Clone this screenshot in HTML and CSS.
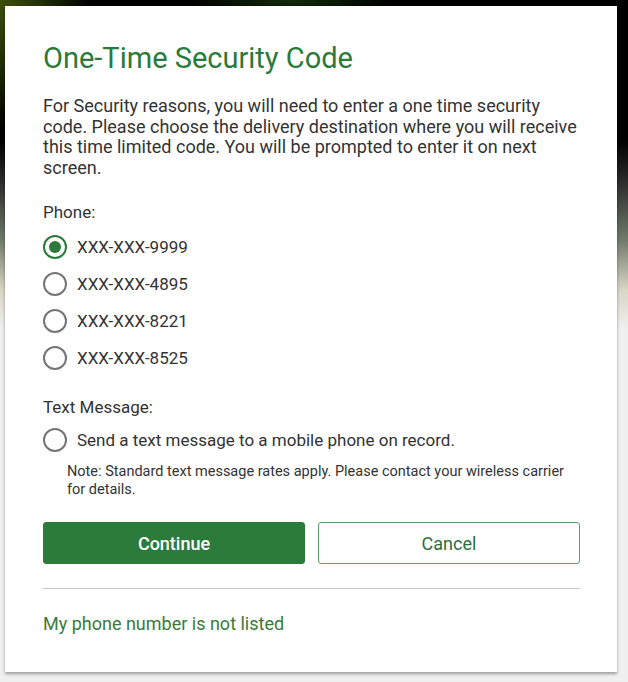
FILE: index.html
```html
<!DOCTYPE html>
<html>
<head>
<meta charset="utf-8">
<link rel="stylesheet" href="styles.css">
</head>
<body>
<div class="card">
  <h1 class="title">One-Time Security Code</h1>
  <p class="intro">For Security reasons, you will need to enter a one time security code. Please choose the delivery destination where you will receive this time limited code. You will be prompted to enter it on next screen.</p>
  <div class="group-label">Phone:</div>
  <ul class="options">
    <li class="option"><span class="radio checked"></span><span class="opt-text">XXX-XXX-9999</span></li>
    <li class="option"><span class="radio"></span><span class="opt-text">XXX-XXX-4895</span></li>
    <li class="option"><span class="radio"></span><span class="opt-text">XXX-XXX-8221</span></li>
    <li class="option"><span class="radio"></span><span class="opt-text">XXX-XXX-8525</span></li>
  </ul>
  <div class="group-label group-label-2">Text Message:</div>
  <ul class="options options-2">
    <li class="option"><span class="radio"></span><span class="opt-text">Send a text message to a mobile phone on record.</span></li>
  </ul>
  <p class="note">Note: Standard text message rates apply. Please contact your wireless carrier for details.</p>
  <div class="buttons">
    <button class="btn btn-primary">Continue</button>
    <button class="btn btn-secondary">Cancel</button>
  </div>
  <hr class="divider">
  <a class="link">My phone number is not listed</a>
</div>
</body>
</html>
```
FILE: styles.css
```css
html, body {
  margin: 0;
  padding: 0;
}
body {
  width: 628px;
  height: 682px;
  overflow: hidden;
  font-family: Roboto, "Liberation Sans", sans-serif;
  background:
    radial-gradient(ellipse 90px 130px at 0 0, #3d4f0c 0%, rgba(61,79,12,0.6) 45%, rgba(0,0,0,0) 100%),
    radial-gradient(ellipse 100px 20px at 290px 0, rgba(20,50,10,0.9) 0%, rgba(0,0,0,0) 100%),
    linear-gradient(to bottom, #000 0px, #000 140px, #2a2a2a 180px, #707a6a 240px, #d8d6c4 290px, #f0f0f0 330px, #f0f0f0 682px);
  padding-top: 6px;
  box-sizing: border-box;
}
.card {
  margin-left: 5px;
  width: 612px;
  box-sizing: border-box;
  background: #fff;
  padding: 35px 37px 36px 38px;
  box-shadow: 0 2px 3px rgba(0,0,0,0.35);
  color: #333;
}
.title {
  margin: 0;
  font-size: 29px;
  font-weight: 400;
  line-height: 34px;
  color: #2a7a3c;
}
.intro {
  margin: 21px 0 0;
  font-size: 18px;
  line-height: 20.5px;
  color: #333;
}
.group-label {
  margin-top: 23px;
  font-size: 17px;
  line-height: 22px;
  color: #333;
}
.group-label-2 {
  margin-top: 26px;
}
.options {
  list-style: none;
  margin: 12px 0 0;
  padding: 0;
  display: flex;
  flex-direction: column;
  gap: 13px;
}
.options-2 {
  margin-top: 10px;
}
.option {
  display: flex;
  align-items: center;
  gap: 10px;
  height: 24px;
}
.radio {
  width: 24px;
  height: 24px;
  box-sizing: border-box;
  border: 2px solid #757575;
  border-radius: 50%;
  flex: none;
  position: relative;
}
.radio.checked {
  border-color: #2a7a3c;
}
.radio.checked::after {
  content: "";
  position: absolute;
  left: 4px;
  top: 4px;
  width: 12px;
  height: 12px;
  border-radius: 50%;
  background: #2a7a3c;
}
.opt-text {
  font-size: 17px;
  color: #333;
}
.note {
  margin: 11px 0 0 24px;
  font-size: 14.5px;
  line-height: 18px;
  color: #333;
}
.buttons {
  margin-top: 23px;
  display: flex;
  gap: 13px;
}
.btn {
  flex: 1;
  height: 42px;
  border-radius: 3px;
  font-family: Roboto, "Liberation Sans", sans-serif;
  font-size: 18px;
  cursor: pointer;
}
.btn-primary {
  background: #2b7b3b;
  border: 1px solid #2b7b3b;
  color: #fff;
  font-weight: 500;
}
.btn-secondary {
  background: #fff;
  border: 1px solid #5b9f6b;
  color: #2a6f3c;
}
.divider {
  margin: 24px 0 0;
  border: none;
  border-top: 1px solid #c8c8c8;
  height: 0;
}
.link {
  display: block;
  margin-top: 23px;
  font-size: 18px;
  line-height: 24px;
  color: #3b7a3b;
  text-decoration: none;
}
```
